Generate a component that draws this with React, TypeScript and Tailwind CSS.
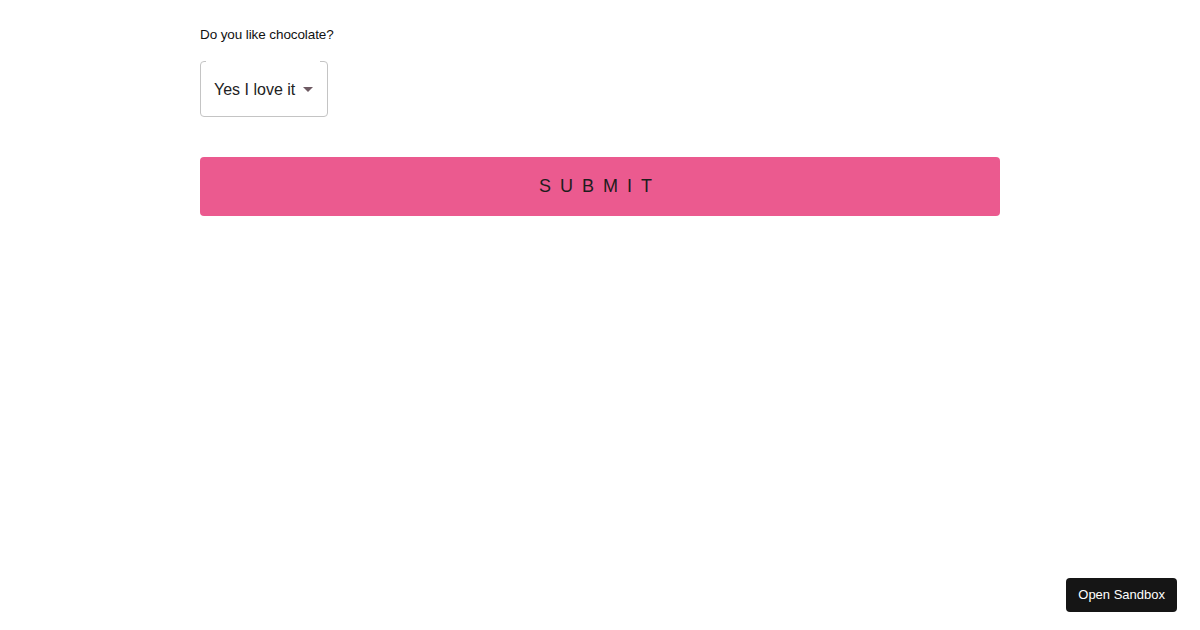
import { useState } from 'react';

const App = () => {
  const [choice] = useState('Yes I love it');

  return (
    <div
      className="relative w-[1200px] h-[630px] bg-white overflow-hidden"
      style={{ fontFamily: '"Liberation Sans", Arial, sans-serif' }}
    >
      <form className="w-[800px] ml-[200px] pt-[26px] flex flex-col">
        <label className="text-[13.5px] leading-[18px] text-[#111] tracking-[-0.1px]">
          Do you like chocolate?
        </label>
        <div className="mt-[17px] flex">
          <div className="relative h-[56px] flex items-center border border-[#c4c4c4] rounded-[4px] pl-[13px] pr-[14px]">
            <span className="absolute -top-[1px] left-[5px] w-[114px] h-[1px] bg-white" />
            <span className="mt-[2px] text-[16px] text-[#222]">{choice}</span>
            <svg width="10" height="5" viewBox="0 0 10 5" className="ml-[8px] mt-[1px]">
              <path d="M0 0 L10 0 L5 5 Z" fill="#6e5a63" />
            </svg>
          </div>
        </div>
        <button
          type="submit"
          className="mt-[40px] h-[59px] w-full rounded-[4px] bg-[#eb5a8f] text-[18px] text-[#1d1d1d] tracking-[9px]"
        >
          SUBMIT
        </button>
      </form>
      <button className="absolute right-[23px] bottom-[18px] h-[34px] px-[12px] rounded-[4px] bg-[#151515] text-white text-[13px]">
        Open Sandbox
      </button>
    </div>
  );
};

export default App;
